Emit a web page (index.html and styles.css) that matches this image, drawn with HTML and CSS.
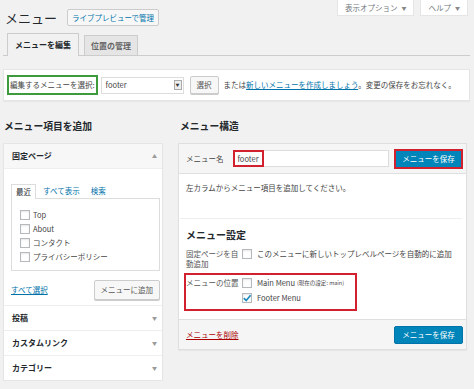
FILE: index.html
```html
<!DOCTYPE html>
<html lang="ja">
<head>
  <meta charset="UTF-8" />
  <meta name="viewport" content="width=device-width, initial-scale=1" />
  <title>メニュー</title>
  <link rel="stylesheet" href="styles.css">
</head>
<body>

  <div class="top">
    <div class="title-row">
      <h1>メニュー</h1>
      <a class="preview-btn">ライブプレビューで管理</a>
    </div>
    <div class="screen-meta">
      <span class="meta-btn">表示オプション <i>▼</i></span>
      <span class="meta-btn">ヘルプ <i>▼</i></span>
    </div>
  </div>

  <div class="tabs">
    <span class="tab active">メニューを編集</span>
    <span class="tab">位置の管理</span>
  </div>

  <div class="manage">
    <span class="select-label">編集するメニューを選択:</span>
    <span class="select">footer<span class="arrow">▼</span></span>
    <span class="btn">選択</span>
    <span class="manage-text">または<a>新しいメニューを作成しましょう</a>。変更の保存をお忘れなく。</span>
  </div>

  <div class="columns">
    <div class="col-left">
      <h2>メニュー項目を追加</h2>
      <div class="acc">
        <div class="acc-title open">固定ページ<span class="acc-arrow">▲</span></div>
        <div class="acc-body">
          <div class="inner-tabs">
            <span class="itab">最近</span>
            <a>すべて表示</a>
            <a class="search">検索</a>
          </div>
          <ul class="checklist">
            <li><span class="cb"></span>Top</li>
            <li><span class="cb"></span>About</li>
            <li><span class="cb"></span>コンタクト</li>
            <li><span class="cb"></span>プライバシーポリシー</li>
          </ul>
          <div class="add-row">
            <a>すべて選択</a>
            <span class="btn">メニューに追加</span>
          </div>
        </div>
        <div class="acc-title">投稿<span class="acc-arrow">▼</span></div>
        <div class="acc-title">カスタムリンク<span class="acc-arrow">▼</span></div>
        <div class="acc-title">カテゴリー<span class="acc-arrow">▼</span></div>
      </div>
    </div>

    <div class="col-right">
      <h2>メニュー構造</h2>
      <div class="menu-box">
        <div class="menu-head">
          <span class="name-label">メニュー名</span>
          <span class="name-input"><span class="hl">footer</span></span>
          <span class="btn-primary marked">メニューを保存</span>
        </div>
        <div class="menu-body">
          <p class="hint">左カラムからメニュー項目を追加してください。</p>
          <div class="divider"></div>
          <h3>メニュー設定</h3>
          <div class="setting">
            <span class="setting-label">固定ページを自動追加</span>
            <div class="options">
              <div class="opt"><span class="cb"></span>このメニューに新しいトップレベルページを自動的に追加</div>
            </div>
          </div>
          <div class="setting marked-box">
            <span class="setting-label">メニューの位置</span>
            <div class="options">
              <div class="opt"><span class="cb"></span>Main Menu <small>(現在の設定: main)</small></div>
              <div class="opt"><span class="cb checked"><svg viewBox="0 0 10 10" width="10" height="10"><path d="M1.8 5.2 L4.2 7.6 L8.6 2.2" fill="none" stroke="#1e8cbe" stroke-width="1.7"/></svg></span>Footer Menu</div>
            </div>
          </div>
        </div>
        <div class="menu-foot">
          <a class="delete">メニューを削除</a>
          <span class="btn-primary">メニューを保存</span>
        </div>
      </div>
    </div>
  </div>

</body>
</html>
```

FILE: styles.css
```css
body {
  margin: 0;
  background-color: #f1f1f1;
  color: #444;
  font-family: "Noto Sans CJK JP", sans-serif;
  font-size: 7.5px;
  line-height: 10px;
}

a {
  color: #0073aa;
  text-decoration: underline;
}

.top {
  display: flex;
  justify-content: space-between;
  align-items: flex-start;
  padding: 0 6px 0 5px;
}

.title-row {
  display: flex;
  align-items: center;
  gap: 10px;
  margin-top: 8px;
  height: 19px;
}

h1 {
  margin: 0;
  font-size: 13px;
  font-weight: 400;
  color: #23282d;
  line-height: 19px;
}

.preview-btn {
  display: flex;
  align-items: center;
  height: 15px;
  padding: 0 4px;
  background-color: #f7f7f7;
  border: 1px solid #ccc;
  border-radius: 2px;
  text-decoration: none;
}

.screen-meta {
  display: flex;
  gap: 6px;
}

.meta-btn {
  display: flex;
  align-items: center;
  height: 16px;
  padding: 0 7px;
  background-color: #fff;
  border: 1px solid #e5e5e5;
  border-top: none;
  color: #72777c;
  box-sizing: border-box;
}

.meta-btn i {
  font-style: normal;
  font-size: 5px;
  color: #888;
  margin-left: 4px;
}

.tabs {
  display: flex;
  align-items: flex-end;
  gap: 5px;
  height: 22px;
  margin: 6px 4px 0 3px;
  padding-left: 4px;
  border-bottom: 1px solid #ccc;
}

.tab {
  display: flex;
  align-items: center;
  box-sizing: border-box;
  height: 20px;
  padding: 0 6px;
  background-color: #e5e5e5;
  border: 1px solid #ccc;
  border-bottom: none;
  color: #666;
  font-weight: 700;
  font-size: 8px;
}

.tab.active {
  height: 23px;
  margin-bottom: -1px;
  padding: 0 7px;
  background-color: #f1f1f1;
  color: #23282d;
}

.manage {
  display: flex;
  align-items: center;
  height: 30px;
  margin: 13px 4px 0 3px;
  padding-left: 3px;
  background-color: #fff;
  border: 1px solid #e5e5e5;
  box-shadow: 0 1px 1px rgba(0,0,0,0.04);
}

.select-label {
  display: flex;
  align-items: center;
  height: 20px;
  padding: 0 1px;
  border: 2px solid #3d9a3d;
  box-sizing: border-box;
}

.select {
  display: flex;
  align-items: center;
  justify-content: space-between;
  box-sizing: border-box;
  width: 83px;
  height: 17px;
  margin-left: 3px;
  padding: 0 1px 0 4px;
  background-color: #fff;
  border: 1px solid #ddd;
}

.select .arrow {
  display: flex;
  align-items: center;
  justify-content: center;
  width: 6px;
  height: 8px;
  font-size: 4px;
  background-color: #eee;
  border: 1px solid #aaa;
  color: #333;
}

.btn {
  display: flex;
  align-items: center;
  box-sizing: border-box;
  height: 18px;
  padding: 0 6px;
  background-color: #f7f7f7;
  border: 1px solid #ccc;
  border-radius: 2px;
  color: #555;
  box-shadow: 0 1px 0 #ccc;
}

.manage .btn {
  margin-left: 6px;
}

.manage-text {
  margin-left: 5px;
}

.columns {
  display: flex;
  gap: 15px;
  padding-left: 3px;
}

h2 {
  margin: 18px 0 10px;
  font-size: 9.8px;
  line-height: 14px;
  font-weight: 700;
  color: #23282d;
}

.col-left {
  width: 160px;
}

.col-left h2 {
  padding-left: 1px;
}

.col-right {
  width: 289px;
}

.col-right h2 {
  padding-left: 2px;
}

.acc {
  background-color: #fff;
  border: 1px solid #e5e5e5;
  box-shadow: 0 1px 1px rgba(0,0,0,0.04);
}

.acc-title {
  display: flex;
  align-items: center;
  justify-content: space-between;
  height: 24px;
  padding: 0 5px 0 8px;
  border-top: 1px solid #eee;
  font-size: 8px;
  font-weight: 700;
  color: #23282d;
}

.acc-title.open {
  border-top: none;
  border-bottom: 1px solid #eee;
  background-color: #f7f7f7;
}

.acc-arrow {
  font-size: 5px;
  font-weight: 400;
  color: #999;
}

.acc-body {
  padding: 15px 2px 5px 7px;
}

.inner-tabs {
  display: flex;
  align-items: flex-end;
  height: 14px;
}

.itab {
  display: flex;
  align-items: center;
  box-sizing: border-box;
  height: 15px;
  margin-bottom: -1px;
  padding: 0 4px;
  background-color: #fff;
  border: 1px solid #ddd;
  border-bottom: none;
  position: relative;
  color: #23282d;
}

.inner-tabs a {
  margin-left: 7px;
  line-height: 14px;
  text-decoration: none;
}

.inner-tabs a.search {
  margin-left: 11px;
}

.checklist {
  list-style: none;
  margin: 0;
  padding: 9px 0 6px 8px;
  border: 1px solid #ddd;
}

.checklist li {
  display: flex;
  align-items: center;
  height: 14px;
}

.cb {
  display: inline-block;
  flex: none;
  width: 10px;
  height: 10px;
  margin-right: 3px;
  box-sizing: border-box;
  background-color: #fff;
  border: 1px solid #b4b9be;
  box-shadow: inset 0 1px 2px rgba(0,0,0,0.1);
}

.cb svg {
  display: block;
  margin: -1px 0 0 -1px;
}

.add-row {
  display: flex;
  align-items: center;
  justify-content: space-between;
  height: 20px;
  margin-top: 9px;
}

.add-row .btn {
  height: 20px;
}

.menu-box {
  background-color: #fff;
  border: 1px solid #dfdfdf;
  box-shadow: 0 1px 1px rgba(0,0,0,0.04);
}

.menu-head {
  display: flex;
  align-items: center;
  height: 29px;
  padding: 0 3px 0 7px;
  background-color: #f5f5f5;
  border-bottom: 1px solid #dfdfdf;
}

.name-label {
  margin-right: 9px;
}

.name-input {
  display: flex;
  box-sizing: border-box;
  width: 156px;
  height: 17px;
  background-color: #fff;
  border: 1px solid #ddd;
}

.name-input .hl {
  display: flex;
  align-items: center;
  margin: -1px 0 -1px -1px;
  padding: 0 3px;
  border: 2px solid #d3202f;
}

.btn-primary {
  display: flex;
  align-items: center;
  justify-content: center;
  box-sizing: border-box;
  width: 69px;
  height: 18px;
  margin-left: auto;
  background-color: #0085ba;
  border: 1px solid #0073aa;
  border-radius: 2px;
  color: #fff;
}

.btn-primary.marked {
  height: 20px;
  border: 2px solid #d3202f;
  border-radius: 0;
}

.menu-body {
  padding: 8px 4px 8px 7px;
}

.hint {
  margin: 0;
  line-height: 12px;
}

.divider {
  margin: 24px 0 0 -6px;
  border-top: 1px solid #eee;
}

h3 {
  margin: 9px 0 7px;
  font-size: 10px;
  line-height: 14px;
  font-weight: 700;
  color: #23282d;
}

.setting {
  display: flex;
}

.setting-label {
  width: 56px;
  flex: none;
  line-height: 10px;
  color: #555;
}

.opt {
  display: flex;
  align-items: center;
  height: 10px;
  white-space: nowrap;
}

.opt .cb {
  margin-right: 5px;
}

.opt small {
  font-size: 5.5px;
  margin-left: 2px;
}

.marked-box {
  width: 169px;
  margin: 4px 0 0 -2px;
  padding: 1px 0 4px;
  border: 2px solid #d3202f;
}

.marked-box .setting-label {
  line-height: 14px;
}

.marked-box .opt {
  height: 14px;
}

.marked-box .opt + .opt {
  margin-top: 1px;
}

.menu-foot {
  display: flex;
  align-items: center;
  height: 29px;
  padding: 0 3px 0 7px;
  background-color: #f5f5f5;
  border-top: 1px solid #dfdfdf;
}

.delete {
  color: #a00;
}
```
